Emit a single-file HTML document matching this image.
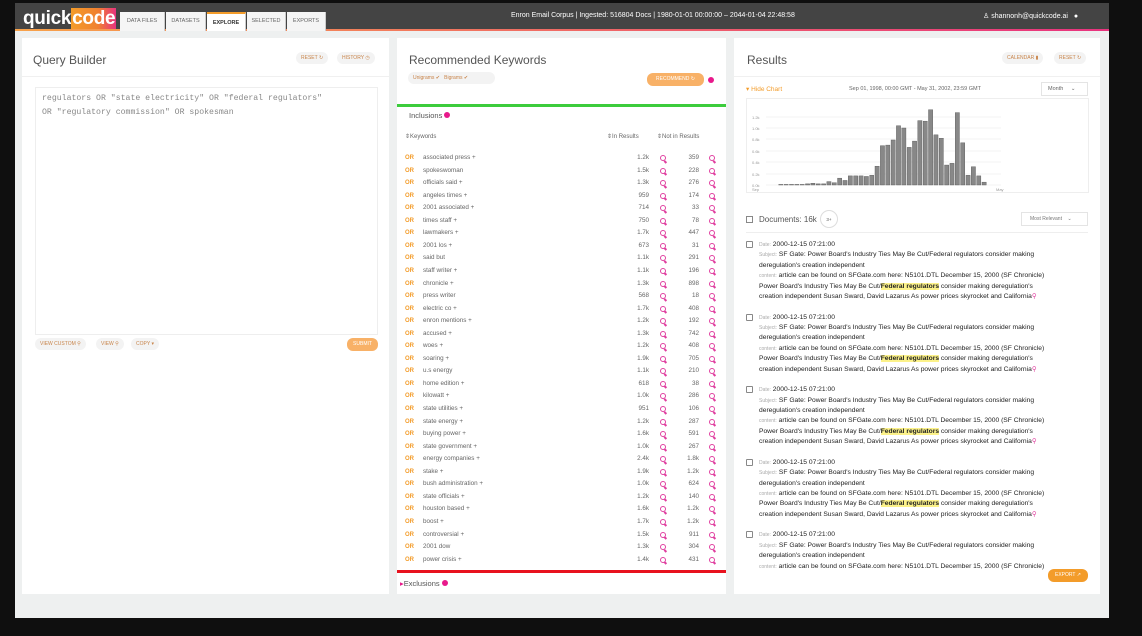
<!DOCTYPE html>
<html><head><meta charset="utf-8"><style>
*{box-sizing:border-box;margin:0;padding:0}
body{width:1142px;height:636px;background:#0f0f0f;font-family:"Liberation Sans",sans-serif;position:relative;overflow:hidden;color:#333}
#app{position:absolute;left:15px;top:3px;width:1094px;height:615px;background:#eef0f0}
#hdr{position:absolute;left:0;top:0;width:1094px;height:28px;background:#444;border-bottom:2px solid;border-image:linear-gradient(90deg,#f7a24a,#e8337f) 1}
.logo{position:absolute;left:8px;top:6px;font-size:19px;font-weight:bold;color:#fff;letter-spacing:-0.3px;line-height:20px}
.logo span{background:linear-gradient(90deg,#f39c2a,#f08030 60%,#e8337f);padding:0 1px}
.tab{position:absolute;top:9px;height:19px;background:#f5f5f5;font-size:5.5px;color:#666;text-align:center;line-height:19px;border-right:1px solid #ccc}
.tab.act{font-weight:bold;color:#333;border-top:2px solid #f39c2a;background:#fff}
.hc{position:absolute;top:9px;font-size:7px;color:#fff}
.panel{position:absolute;top:35px;height:556px;background:#fff}
h2{position:absolute;font-size:12px;font-weight:normal;color:#555}
.btn{position:absolute;height:12px;background:#f3f3f3;border-radius:6px;font-size:5px;color:#c8844a;line-height:12px;padding:0 5px}
.obtn{position:absolute;background:#f8b167;color:#fff;border-radius:6px;font-size:5px;text-align:center}
.pk{display:inline-block;width:6px;height:6px;border-radius:50%;background:#e8198b}
.row{position:absolute;left:8px;width:320px;height:12.5px;font-size:6.3px;line-height:12.5px;color:#666}
.row b{position:absolute;left:0;color:#f39c2a;font-size:6px}
.row .k{position:absolute;left:18px}
.row .a{position:absolute;right:76px;text-align:right}
.row .b{position:absolute;right:26px;text-align:right}
.mg{position:absolute;width:6px;height:6px;border:1.5px solid #e040a0;border-radius:50%;top:3px}
.mg:after{content:"";position:absolute;width:3px;height:1.5px;background:#e040a0;transform:rotate(45deg);left:2.5px;top:4.5px}
.doc{position:absolute;left:12px;width:340px;font-size:6.7px;line-height:10.4px;color:#222}
.doc .cb{position:absolute;left:0;top:1px;width:7px;height:7px;border:1px solid #888;border-radius:1px}
.doc .t{position:absolute;left:13px;width:325px}
.doc i{font-style:normal;color:#aaa;font-size:5px}
.hl{background:#fcf28a;font-weight:bold}
</style></head><body>
<div id="app">
<div id="hdr">
<div class="logo">quick<span>code</span></div>
<div class="tab" style="left:105px;width:45px">DATA FILES</div>
<div class="tab" style="left:151px;width:40px">DATASETS</div>
<div class="tab act" style="left:192px;width:39px">EXPLORE</div>
<div class="tab" style="left:232px;width:39px">SELECTED</div>
<div class="tab" style="left:272px;width:39px">EXPORTS</div>
<div class="hc" style="left:496px">Enron Email Corpus | Ingested: 516804 Docs | 1980-01-01 00:00:00 – 2044-01-04 22:48:58</div>
<div class="hc" style="left:968px">&#9817; shannonh@quickcode.ai &nbsp;&nbsp;&#9679;</div>
</div>

<div class="panel" style="left:7px;width:367px">
<h2 style="left:11px;top:15px">Query Builder</h2>
<div class="btn" style="left:274px;top:14px">RESET &#8635;</div>
<div class="btn" style="left:315px;top:14px">HISTORY &#9719;</div>
<div style="position:absolute;left:0;top:38px;width:367px;border-top:1px solid #f0f0f0"></div>
<div style="position:absolute;left:13px;top:49px;width:343px;height:248px;border:1px solid #eee;font-family:'Liberation Mono',monospace;font-size:8.2px;line-height:14px;color:#888;padding:4px 6px">regulators OR "state electricity" OR "federal regulators"<br>OR "regulatory commission" OR spokesman</div>
<div class="btn" style="left:13px;top:300px">VIEW CUSTOM &#9906;</div>
<div class="btn" style="left:74px;top:300px">VIEW &#9906;</div>
<div class="btn" style="left:109px;top:300px">COPY &#9662;</div>
<div class="obtn" style="left:325px;top:300px;width:31px;height:13px;line-height:13px">SUBMIT</div>
</div>

<div class="panel" style="left:382px;width:329px">
<h2 style="left:12px;top:15px">Recommended Keywords</h2>
<div class="btn" style="left:11px;top:34px;width:87px">Unigrams &#10004; &nbsp; Bigrams &#10004;</div>
<div class="obtn" style="left:250px;top:35px;width:57px;height:13px;line-height:13px">RECOMMEND &#8635;</div>
<span class="pk" style="position:absolute;left:311px;top:39px"></span>
<div style="position:absolute;left:0;top:66px;width:329px;height:3px;background:#3ccc3c"></div>
<div style="position:absolute;left:12px;top:73px;font-size:7.5px;color:#555">Inclusions <span class="pk"></span></div>
<div style="position:absolute;left:8px;top:95px;font-size:6px;color:#666">&#8661;Keywords</div>
<div style="position:absolute;left:210px;top:95px;font-size:6px;color:#666">&#8661;In Results</div>
<div style="position:absolute;left:260px;top:95px;font-size:6px;color:#666">&#8661;Not in Results</div>
<div id="rows"></div>
<div style="position:absolute;left:0;top:532px;width:329px;height:3px;background:#e8121e"></div>
<div style="position:absolute;left:3px;top:541px;font-size:7.5px;color:#555"><span style="color:#e8198b">&#9656;</span>Exclusions <span class="pk"></span></div>
</div>

<div class="panel" style="left:719px;width:366px">
<h2 style="left:13px;top:15px">Results</h2>
<div class="btn" style="left:268px;top:14px">CALENDAR &#9646;</div>
<div class="btn" style="left:320px;top:14px">RESET &#8635;</div>
<div style="position:absolute;left:0;top:38px;width:366px;border-top:1px solid #f0f0f0"></div>
<div style="position:absolute;left:12px;top:47px;font-size:6.5px;color:#f39c2a">&#9662; Hide Chart</div>
<div style="position:absolute;left:115px;top:48px;font-size:5.5px;color:#666">Sep 01, 1998, 00:00 GMT - May 31, 2002, 23:59 GMT</div>
<div style="position:absolute;left:307px;top:44px;width:47px;height:14px;border:1px solid #e4e4e4;font-size:5.5px;color:#666;line-height:12px;padding-left:6px">Month &nbsp;&nbsp;&nbsp; &#8964;</div>
<svg style="position:absolute;left:12px;top:60px" width="343" height="95" viewBox="0 0 343 95">
<rect x="0.5" y="0.5" width="342" height="94" fill="#fff" stroke="#eee"/>
<g stroke="#e8e8e8" stroke-width="0.6">
<line x1="20" y1="19" x2="255" y2="19"/><line x1="20" y1="30" x2="255" y2="30"/><line x1="20" y1="41" x2="255" y2="41"/><line x1="20" y1="53" x2="255" y2="53"/><line x1="20" y1="64" x2="255" y2="64"/><line x1="20" y1="76" x2="255" y2="76"/><line x1="20" y1="87" x2="255" y2="87"/></g>
<g font-size="4" fill="#999" font-family="Liberation Sans">
<text x="6" y="21">1.2k</text><text x="6" y="32">1.0k</text><text x="6" y="43">0.8k</text><text x="6" y="55">0.6k</text><text x="6" y="66">0.4k</text><text x="6" y="78">0.2k</text><text x="6" y="89">0.0k</text><text x="6" y="93">Sep</text><text x="250" y="93">May</text></g>
<g id="bars" fill="#888" stroke="#555" stroke-width="0.4"></g>
</svg>
<div style="position:absolute;left:12px;top:178px;width:7px;height:7px;border:1px solid #888"></div>
<div style="position:absolute;left:25px;top:177px;font-size:8px;color:#555">Documents: 16k</div>
<div style="position:absolute;left:86px;top:172px;width:18px;height:18px;border:1px solid #ddd;border-radius:50%;font-size:4.5px;text-align:center;line-height:17px;color:#555">3+</div>
<div style="position:absolute;left:287px;top:174px;width:67px;height:14px;border:1px solid #e4e4e4;font-size:5px;color:#777;line-height:12px;padding-left:8px">Most Relevant &nbsp;&nbsp; &#8964;</div>
<div style="position:absolute;left:12px;top:194px;width:342px;border-top:1px solid #eee"></div>
<div id="docs"></div>
<div class="obtn" style="left:314px;top:531px;width:40px;height:13px;line-height:13px;background:#f39c2a">EXPORT &#8599;</div>
</div>
</div>
<script>
var d=[["associated press +","1.2k","359"],["spokeswoman","1.5k","228"],["officials said +","1.3k","276"],["angeles times +","959","174"],["2001 associated +","714","33"],["times staff +","750","78"],["lawmakers +","1.7k","447"],["2001 los +","673","31"],["said but","1.1k","291"],["staff writer +","1.1k","196"],["chronicle +","1.3k","898"],["press writer","568","18"],["electric co +","1.7k","408"],["enron mentions +","1.2k","192"],["accused +","1.3k","742"],["woes +","1.2k","408"],["soaring +","1.9k","705"],["u.s energy","1.1k","210"],["home edition +","618","38"],["kilowatt +","1.0k","286"],["state utilities +","951","106"],["state energy +","1.2k","287"],["buying power +","1.6k","591"],["state government +","1.0k","267"],["energy companies +","2.4k","1.8k"],["stake +","1.9k","1.2k"],["bush administration +","1.0k","624"],["state officials +","1.2k","140"],["houston based +","1.6k","1.2k"],["boost +","1.7k","1.2k"],["controversial +","1.5k","911"],["2001 dow","1.3k","304"],["power crisis +","1.4k","431"],["state power +","1.3k","501"]];
var h="";d.forEach(function(r,i){var y=114+i*12.55;if(y>528)return;var hh=Math.min(12.5,532-y);h+='<div class="row" style="top:'+y+'px;height:'+hh+'px;overflow:hidden"><b>OR</b><span class="k">'+r[0]+'</span><span class="a" style="right:76px">'+r[1]+'</span><span class="mg" style="left:255px"></span><span class="b">'+r[2]+'</span><span class="mg" style="left:304px"></span></div>'});
document.getElementById("rows").innerHTML=h;
var v=[0,0,0.01,0.01,0.01,0.01,0.01,0.02,0.03,0.02,0.02,0.06,0.04,0.12,0.08,0.16,0.16,0.16,0.15,0.17,0.33,0.69,0.70,0.79,1.04,1.0,0.66,0.77,1.13,1.12,1.32,0.88,0.82,0.35,0.38,1.27,0.74,0.17,0.32,0.16,0.05,0];
var b="";v.forEach(function(x,i){var hh=x*57;b+='<rect x="'+(22+i*5.35)+'" y="'+(87-hh)+'" width="4.2" height="'+hh+'"/>'});
document.getElementById("bars").innerHTML=b;
var dh="";[0,1,2,3,4].forEach(function(i){var y=202+i*72.6;var c=i==4?'':'<br>Power Board\'s Industry Ties May Be Cut/<span class="hl">Federal regulators</span> consider making deregulation\'s<br>creation independent Susan Sward, David Lazarus As power prices skyrocket and California<span style="color:#e040a0">&#9906;</span>';dh+='<div class="doc" style="top:'+y+'px;'+(i==4?'height:60px;overflow:hidden':'')+'"><div class="cb"></div><div class="t"><i>Date:</i> 2000-12-15 07:21:00<br><i>Subject:</i> SF Gate: Power Board\'s Industry Ties May Be Cut/Federal regulators consider making<br>deregulation\'s creation independent<br><i>content:</i> article can be found on SFGate.com here: N5101.DTL December 15, 2000 (SF Chronicle)'+c+'</div></div>'});
document.getElementById("docs").innerHTML=dh;
</script>
</body></html>
